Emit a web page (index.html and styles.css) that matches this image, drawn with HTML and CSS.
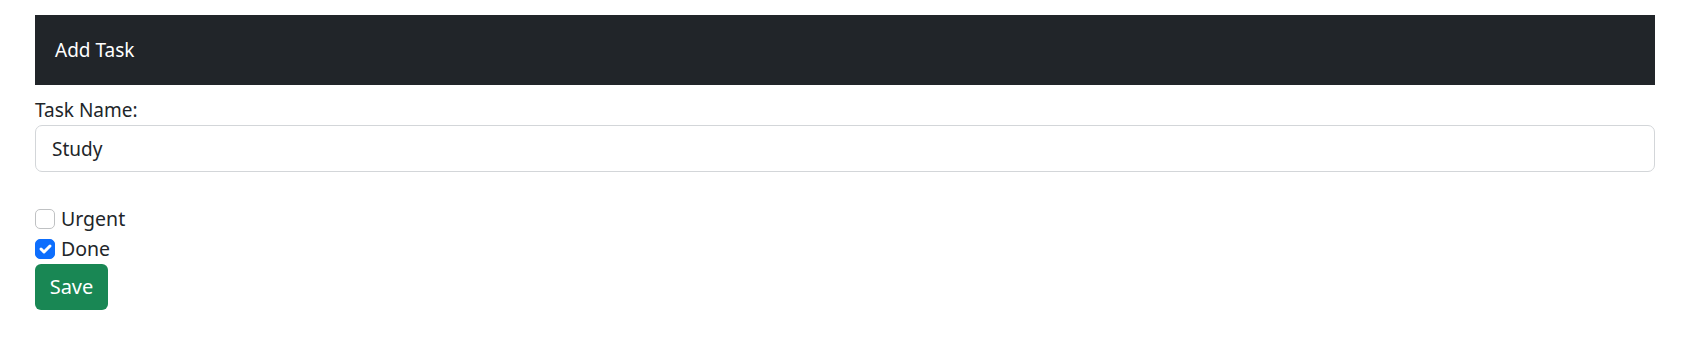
FILE: index.html
```html
<!DOCTYPE html>
<html lang="en">
<head>
<meta charset="utf-8">
<title>Add Task</title>
<link rel="stylesheet" href="styles.css">
</head>
<body>
<div class="page">
  <div class="header">Add Task</div>
  <form class="task-form">
    <label class="field-label" for="name">Task Name:</label>
    <div class="input">Study</div>
    <div class="checks">
      <div class="check">
        <span class="box"></span>
        <span class="check-label">Urgent</span>
      </div>
      <div class="check">
        <span class="box checked">
          <svg viewBox="0 0 20 20" width="20" height="20"><path d="M6 10l3 3l6-6" fill="none" stroke="#fff" stroke-width="3" stroke-linecap="round" stroke-linejoin="round"/></svg>
        </span>
        <span class="check-label">Done</span>
      </div>
    </div>
    <div class="btn">Save</div>
  </form>
</div>
</body>
</html>
```
FILE: styles.css
```css
* { box-sizing: border-box; }
html, body {
  margin: 0;
  background: #fff;
}
body {
  font-family: "Noto Sans", "Open Sans", "DejaVu Sans", sans-serif;
  font-size: 19px;
  line-height: 30px;
  color: #212529;
}
.page {
  padding: 15px 33px 0 35px;
}
.header {
  height: 70px;
  background: #212529;
  color: #fff;
  padding-left: 20px;
  display: flex;
  align-items: center;
}
.task-form {
  display: flex;
  flex-direction: column;
  align-items: flex-start;
}
.field-label {
  margin-top: 10px;
  height: 30px;
}
.input {
  align-self: stretch;
  height: 47px;
  border: 1px solid #d3d6d9;
  border-radius: 7px;
  padding: 7px 16px;
  display: flex;
  align-items: center;
}
.checks {
  margin-top: 32px;
}
.check {
  height: 30px;
  display: flex;
  align-items: center;
}
.check-label {
  font-size: 19.5px;
}
.box {
  width: 20px;
  height: 20px;
  border: 1px solid #bfc1c3;
  border-radius: 5px;
  background: #fff;
  margin-right: 6px;
  display: flex;
}
.box.checked {
  background: #0d6efd;
  border-color: #0d6efd;
}
.box svg {
  margin: -1px;
}
.btn {
  height: 46px;
  width: 73px;
  background: #198754;
  color: #fff;
  font-size: 20px;
  border-radius: 6px;
  display: flex;
  align-items: center;
  justify-content: center;
}
```
